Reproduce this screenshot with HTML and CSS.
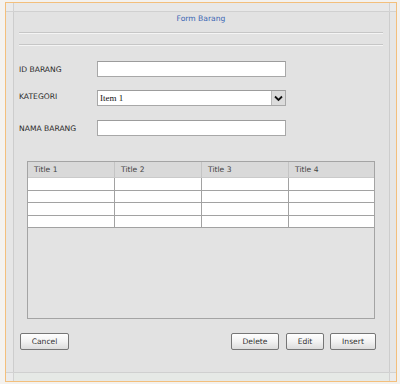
FILE: index.html
```html
<!DOCTYPE html>
<html>
<head>
<meta charset="utf-8">
<link rel="stylesheet" href="styles.css">
</head>
<body>
<div class="frame">
  <div class="corner"></div>
  <div class="ruler-top"></div>
  <div class="corner corner-r"></div>
  <div class="ruler-left"></div>
  <div class="content">
    <div class="title">Form Barang</div>
    <div class="sep"></div>
    <div class="sep sep2"></div>
    <div class="row row1">
      <div class="label">ID BARANG</div>
      <div class="field"></div>
    </div>
    <div class="row row2">
      <div class="label">KATEGORI</div>
      <div class="field select">
        <span class="sel-text">Item 1</span>
        <span class="sel-btn"><svg width="9" height="7" viewBox="0 0 9 7"><path d="M1 1.5 L4.5 5 L8 1.5" fill="none" stroke="#111" stroke-width="1.8"/></svg></span>
      </div>
    </div>
    <div class="row row3">
      <div class="label">NAMA BARANG</div>
      <div class="field"></div>
    </div>
    <div class="table">
      <div class="thead">
        <div class="th">Title 1</div>
        <div class="th">Title 2</div>
        <div class="th">Title 3</div>
        <div class="th">Title 4</div>
      </div>
      <div class="tbody">
        <div class="tr"><div class="td"></div><div class="td"></div><div class="td"></div><div class="td"></div></div>
        <div class="tr"><div class="td"></div><div class="td"></div><div class="td"></div><div class="td"></div></div>
        <div class="tr"><div class="td"></div><div class="td"></div><div class="td"></div><div class="td"></div></div>
        <div class="tr"><div class="td"></div><div class="td"></div><div class="td"></div><div class="td"></div></div>
      </div>
    </div>
    <div class="buttons">
      <div class="btn btn-cancel">Cancel</div>
      <div class="spacer"></div>
      <div class="btn btn-delete">Delete</div>
      <div class="btn btn-edit">Edit</div>
      <div class="btn btn-insert">Insert</div>
    </div>
  </div>
  <div class="ruler-right"></div>
  <div class="corner corner-bl"></div>
  <div class="ruler-bottom"></div>
  <div class="corner corner-br"></div>
</div>
</body>
</html>
```
FILE: styles.css
```css
html, body {
  margin: 0;
  padding: 0;
  background: #f4f2ef;
}
body {
  width: 400px;
  height: 384px;
  overflow: hidden;
  font-family: "DejaVu Sans", sans-serif;
  font-size: 8px;
  color: #333;
}
.frame {
  margin: 2px 0 0 5px;
  width: 390px;
  height: 378px;
  border: 1px solid #f3bf7c;
  display: grid;
  grid-template-columns: 8px 1fr 7px;
  grid-template-rows: 9px 1fr 9px;
  background: #e2e2e2;
}
.corner {
  background: #ebebeb;
  border-right: 1px solid #d2d2d2;
  border-bottom: 1px solid #d2d2d2;
  box-sizing: border-box;
}
.corner-r {
  border-right: none;
  border-left: 1px solid #d2d2d2;
}
.corner-bl {
  border-bottom: none;
  border-top: 1px solid #d2d2d2;
}
.corner-br {
  border-bottom: none;
  border-right: none;
  border-top: 1px solid #d2d2d2;
  border-left: 1px solid #d2d2d2;
}
.ruler-top {
  background: #e8e8e8;
  border-bottom: 1px solid #d0d0d0;
  box-sizing: border-box;
}
.ruler-bottom {
  background: #e6e9e6;
  border-top: 1px solid #d0d0d0;
  box-sizing: border-box;
}
.ruler-left {
  background: #e6e6e6;
  border-right: 1px solid #cdcdcd;
  box-sizing: border-box;
}
.ruler-right {
  background: #e6e6e6;
  border-left: 1px solid #cdcdcd;
  box-sizing: border-box;
}
.content {
  background: #e2e2e2;
  padding: 0 6px 0 5px;
  display: flex;
  flex-direction: column;
  min-height: 0;
}
.title {
  height: 20px;
  line-height: 10px;
  padding-top: 2px;
  box-sizing: border-box;
  text-align: center;
  color: #3a66b4;
  font-size: 7.6px;
}
.sep {
  height: 1px;
  border-top: 1px solid #c6c6c6;
  background: #f4f4f4;
}
.sep2 {
  margin-top: 10px;
}
.row {
  display: flex;
  align-items: center;
  height: 16px;
}
.row1 { margin-top: 15px; }
.row2 { margin-top: 13px; }
.row3 { margin-top: 14px; }
.label {
  width: 78px;
  font-size: 7.6px;
  color: #2a2a2a;
}
.row2 .label { margin-top: -3px; }
.field {
  width: 189px;
  height: 16px;
  box-sizing: border-box;
  background: #fff;
  border: 1px solid #a8a8a8;
  border-top-color: #9c9c9c;
}
.select {
  display: flex;
  align-items: center;
}
.sel-text {
  flex: 1;
  padding-left: 2px;
  font-family: "Liberation Serif", serif;
  font-size: 9px;
  color: #111;
}
.sel-btn {
  width: 13px;
  height: 14px;
  background: #dcdcdc;
  border-left: 1px solid #b8b8b8;
  display: flex;
  align-items: center;
  justify-content: center;
}
.table {
  margin: 25px 8px 0 8px;
  height: 158px;
  box-sizing: border-box;
  border: 1px solid #a4a4a4;
  background: #e3e3e3;
  display: flex;
  flex-direction: column;
}
.thead {
  display: grid;
  grid-template-columns: 87px 87px 87px 1fr;
  height: 16px;
  background: #d9d9d9;
}
.th {
  padding-left: 6px;
  line-height: 15px;
  font-size: 7.6px;
  color: #444;
  border-right: 1px solid #c4c4c4;
  border-bottom: 1px solid #cacaca;
}
.th:last-child { border-right: none; }
.tr {
  display: grid;
  grid-template-columns: 87px 87px 87px 1fr;
  height: 12.5px;
  box-sizing: border-box;
  border-bottom: 1px solid #a2a2a2;
  background: #fff;
}
.td {
  border-right: 1px solid #a2a2a2;
}
.td:last-child { border-right: none; }
.buttons {
  display: flex;
  margin-top: 14px;
  padding-left: 1px;
  padding-right: 7px;
  gap: 7px;
}
.spacer { flex: 1; }
.btn {
  height: 17px;
  box-sizing: border-box;
  border: 1px solid #767676;
  border-radius: 2px;
  background: linear-gradient(#ffffff, #f2f2f2 50%, #dcdcdc);
  text-align: center;
  line-height: 15px;
  font-size: 7.6px;
  color: #333;
}
.btn-cancel { width: 49px; }
.btn-delete { width: 48px; }
.btn-edit { width: 38px; }
.btn-insert { width: 46px; margin-left: -1px; }
```
